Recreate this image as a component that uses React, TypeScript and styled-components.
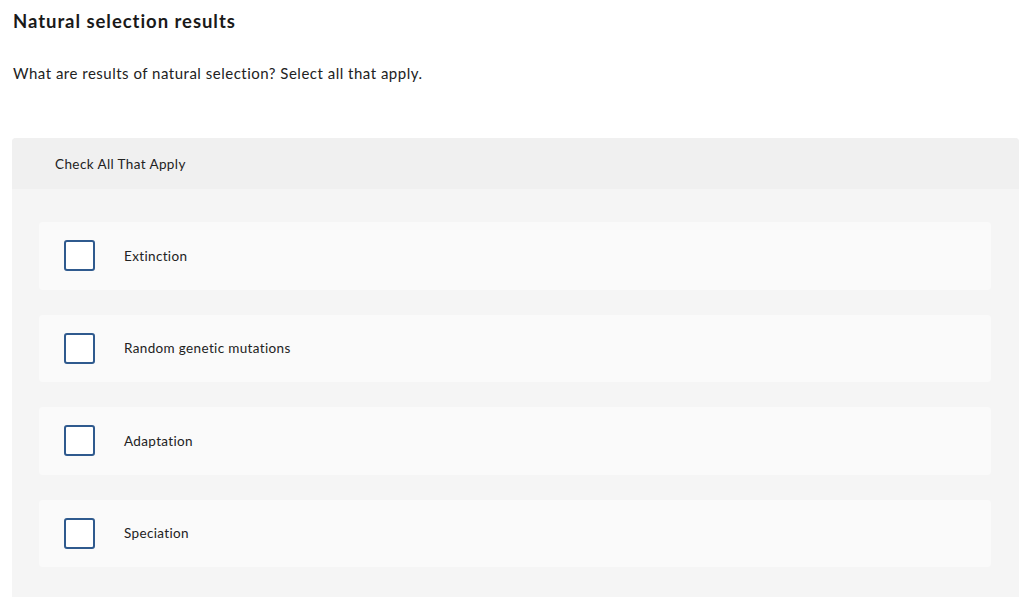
import React from "react";
import styled, { createGlobalStyle } from "styled-components";

const Global = createGlobalStyle`
  html, body { margin: 0; padding: 0; background: #ffffff; }
  body { font-family: Lato, "Open Sans", Arial, sans-serif; color: #1f1f1f; }
  * { box-sizing: border-box; }
`;

const Page = styled.div`
  padding: 0 5px 0 12px;
  display: flex;
  flex-direction: column;
`;

const Title = styled.h1`
  margin: 0;
  padding: 10px 0 0 1px;
  font-size: 18.5px;
  line-height: 22px;
  font-weight: 700;
  letter-spacing: 0.95px;
  color: #1a1a1a;
`;

const Question = styled.p`
  margin: 0;
  padding: 31px 0 0 1px;
  font-size: 15px;
  line-height: 20px;
  letter-spacing: 0.5px;
  color: #222222;
`;

const Panel = styled.section`
  margin-top: 55px;
  background: #f5f5f5;
  border-radius: 4px 4px 0 0;
  display: flex;
  flex-direction: column;
`;

const PanelHeader = styled.div`
  height: 51px;
  background: #f0f0f0;
  border-radius: 4px 4px 0 0;
  display: flex;
  align-items: center;
  padding-left: 43px;
  font-size: 13.5px;
  letter-spacing: 0.4px;
  color: #222222;
`;

const OptionList = styled.div`
  display: flex;
  flex-direction: column;
  gap: 25px;
  padding: 33px 28px 30px 27px;
`;

const OptionCard = styled.label`
  height: 67.5px;
  background: #fafafa;
  border-radius: 4px;
  display: flex;
  align-items: center;
  padding-left: 25px;
  gap: 29px;
  font-size: 13.5px;
  letter-spacing: 0.35px;
  color: #222222;
  cursor: pointer;
`;

const Box = styled.span`
  width: 31px;
  height: 31px;
  border: 2px solid #2f5a8e;
  border-radius: 3px;
  background: #ffffff;
  flex-shrink: 0;
`;

const options = ["Extinction", "Random genetic mutations", "Adaptation", "Speciation"];

export default function App() {
  return (
    <>
      <Global />
      <Page>
        <Title>Natural selection results</Title>
        <Question>What are results of natural selection? Select all that apply.</Question>
        <Panel>
          <PanelHeader>Check All That Apply</PanelHeader>
          <OptionList>
            {options.map((o) => (
              <OptionCard key={o}>
                <Box />
                <span>{o}</span>
              </OptionCard>
            ))}
          </OptionList>
        </Panel>
      </Page>
    </>
  );
}
